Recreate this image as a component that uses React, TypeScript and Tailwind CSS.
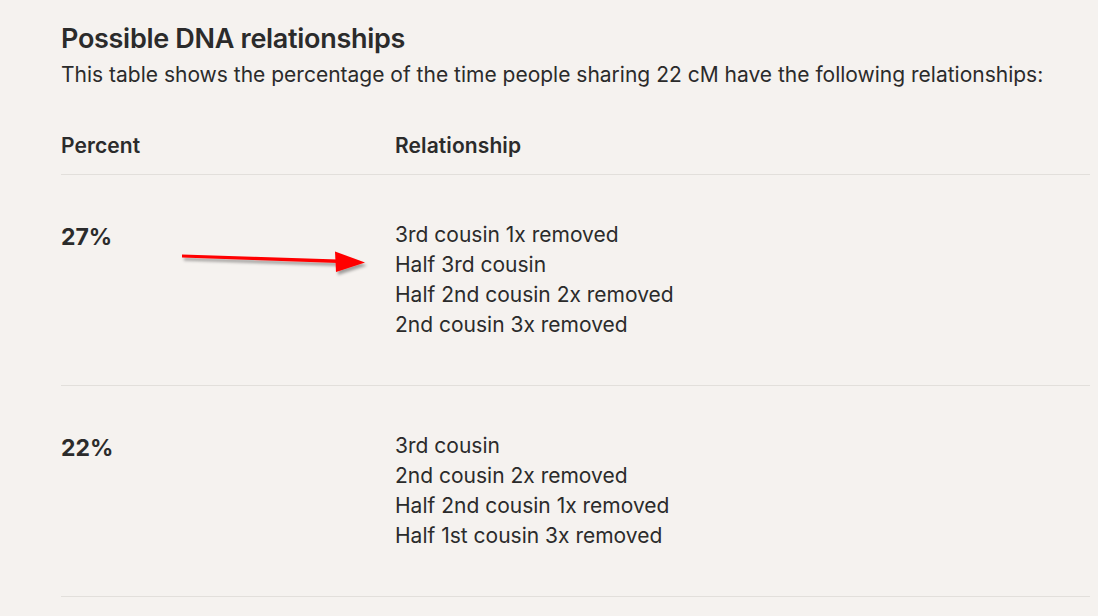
const rows = [
  {
    percent: "27%",
    relationships: [
      "3rd cousin 1x removed",
      "Half 3rd cousin",
      "Half 2nd cousin 2x removed",
      "2nd cousin 3x removed",
    ],
  },
  {
    percent: "22%",
    relationships: [
      "3rd cousin",
      "2nd cousin 2x removed",
      "Half 2nd cousin 1x removed",
      "Half 1st cousin 3x removed",
    ],
  },
];

function Arrow() {
  return (
    <svg
      className="absolute left-[178px] top-[248px]"
      width="196"
      height="30"
      viewBox="0 0 196 30"
    >
      <defs>
        <filter id="shadow" x="-10%" y="-50%" width="120%" height="200%">
          <feDropShadow dx="2" dy="3" stdDeviation="1.5" floodColor="#000" floodOpacity="0.35" />
        </filter>
      </defs>
      <g filter="url(#shadow)">
        <polygon points="4,6.5 160,11.5 160,15 4,9.5" fill="#ff0000" />
        <polygon points="157,3.5 187,14.5 158,24" fill="#ff0000" />
      </g>
    </svg>
  );
}

export default function App() {
  return (
    <div className="relative min-h-[616px] w-full bg-[#f5f2ef] pl-[61px] pr-[8px] pt-[23px] font-['Inter',sans-serif] text-[#2b2b2b]">
      <h2 className="text-[27px] font-semibold leading-[32px] tracking-[-0.3px]">
        Possible DNA relationships
      </h2>
      <p className="mt-[6px] text-[21px] leading-[28px]">
        This table shows the percentage of the time people sharing 22 cM have the following relationships:
      </p>

      <div className="mt-[43px] flex border-b border-[#e2dfdb] pb-[14px] text-[21px] font-semibold leading-[28px] tracking-[0.1px]">
        <div className="w-[334px]">Percent</div>
        <div>Relationship</div>
      </div>

      {rows.map((row) => (
        <div
          key={row.percent}
          className="flex border-b border-[#e2dfdb] pb-[45px] pt-[45px]"
        >
          <div className="w-[334px] text-[23px] font-bold leading-[34px]">{row.percent}</div>
          <div className="text-[21px] leading-[30px]">
            {row.relationships.map((r) => (
              <div key={r}>{r}</div>
            ))}
          </div>
        </div>
      ))}

      <Arrow />
    </div>
  );
}
